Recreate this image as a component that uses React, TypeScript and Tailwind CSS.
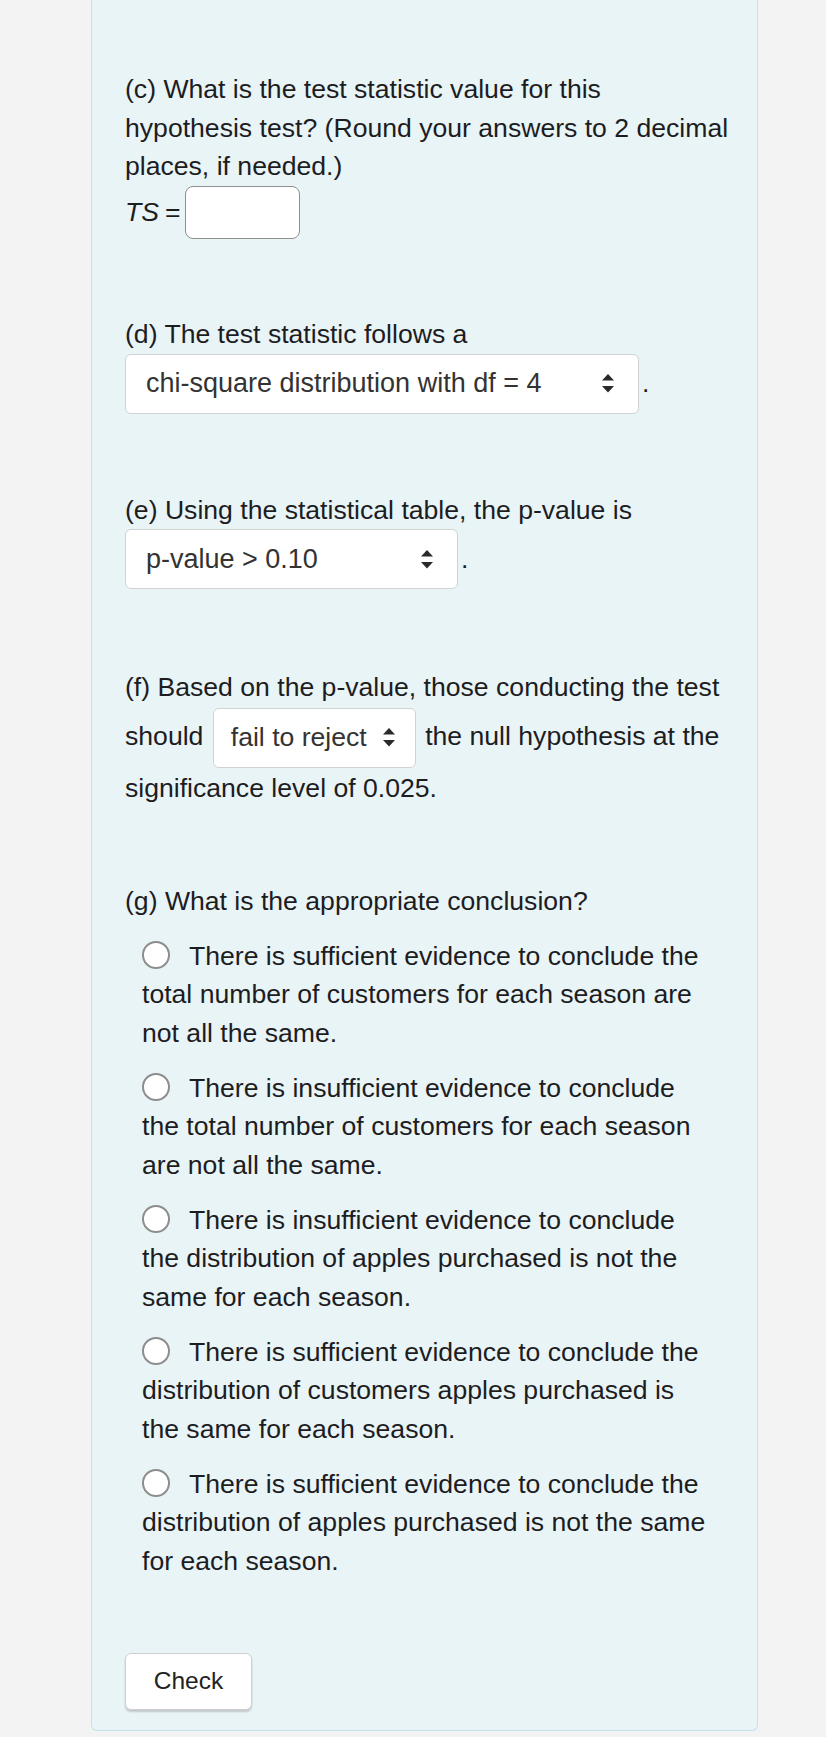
import React from 'react';

const SelectArrows = () => (
  <svg width="12" height="19" viewBox="0 0 12 19" className="shrink-0">
    <polygon points="6,0 12,6.5 0,6.5" fill="#2a2a2a" />
    <polygon points="0,12 12,12 6,18.5" fill="#2a2a2a" />
  </svg>
);

const Radio = () => (
  <span className="inline-block w-[28px] h-[28px] rounded-full border-2 border-[#8d8d8d] bg-white align-middle mr-[19px] -mt-[4px]" />
);

// line breaks kept as in the reference
const options = [
  ['There is sufficient evidence to conclude the', 'total number of customers for each season are', 'not all the same.'],
  ['There is insufficient evidence to conclude', 'the total number of customers for each season', 'are not all the same.'],
  ['There is insufficient evidence to conclude', 'the distribution of apples purchased is not the', 'same for each season.'],
  ['There is sufficient evidence to conclude the', 'distribution of customers apples purchased is', 'the same for each season.'],
  ['There is sufficient evidence to conclude the', 'distribution of apples purchased is not the same', 'for each season.'],
];

const App = () => {
  return (
    <div className="min-h-screen bg-[#f3f3f3] pb-[6px] font-['Liberation_Sans',Arial,sans-serif] text-[#1d1d1f]">
      <div className="ml-[91px] w-[667px] bg-[#e9f4f7] border-[1.5px] border-t-0 border-[#c6e1e9] rounded-b-[6px] pl-[33px] pr-[10px] pt-[70px] pb-[20px]">
        <div className="w-[622px] text-[26.6px] leading-[38.5px]">
          <p>
            (c) What is the test statistic value for this
            <br />
            hypothesis test? (Round your answers to 2 decimal
            <br />
            places, if needed.)
          </p>
          <div className="flex items-center h-[53px] mt-[0.5px]">
            <span className="italic">TS</span>
            <span className="ml-[6px] mr-[4px]">=</span>
            <input
              type="text"
              className="w-[115px] h-[53px] bg-white border-[1.5px] border-[#8f8f8f] rounded-[8px] outline-none"
            />
          </div>

          <p className="mt-[76px]">(d) The test statistic follows a</p>
          <div className="flex items-center">
            <button className="flex items-center justify-between w-[514px] h-[60px] bg-white border-[1.5px] border-[#d2d2d2] rounded-[6px] pl-[20px] pr-[24px] text-[#333] text-[27px]">
              <span>chi-square distribution with df = 4</span>
              <SelectArrows />
            </button>
            <span className="ml-[3px]">.</span>
          </div>

          <p className="mt-[77px]">(e) Using the statistical table, the p-value is</p>
          <div className="flex items-center">
            <button className="flex items-center justify-between w-[333px] h-[60px] bg-white border-[1.5px] border-[#d2d2d2] rounded-[6px] pl-[20px] pr-[24px] text-[#333] text-[27px]">
              <span>p-value &gt; 0.10</span>
              <SelectArrows />
            </button>
            <span className="ml-[3px]">.</span>
          </div>

          <p className="mt-[79px]">
            (f) Based on the p-value, those conducting the test
            <br />
            should{' '}
            <span className="inline-flex items-center justify-between align-middle w-[203px] h-[60px] my-[1px] mx-[2px] bg-white border-[1.5px] border-[#d2d2d2] rounded-[6px] pl-[17px] pr-[20px] text-[#333]">
              <span>fail to reject</span>
              <SelectArrows />
            </span>{' '}
            the null hypothesis at the
            <br />
            significance level of 0.025.
          </p>

          <p className="mt-[75px]">(g) What is the appropriate conclusion?</p>
          <div className="mx-[17px] mt-[16px] flex flex-col gap-[16.5px]">
            {options.map((lines, i) => (
              <label key={i} className="block">
                <Radio />
                {lines[0]}
                <br />
                {lines[1]}
                <br />
                {lines[2]}
              </label>
            ))}
          </div>

          <button className="mt-[73px] w-[127px] h-[57px] bg-white border-[1.5px] border-[#cfcfcf] rounded-[6px] shadow-[0_2px_2px_rgba(0,0,0,0.18)] text-[24.5px] text-[#222]">
            Check
          </button>
        </div>
      </div>
    </div>
  );
};

export default App;
